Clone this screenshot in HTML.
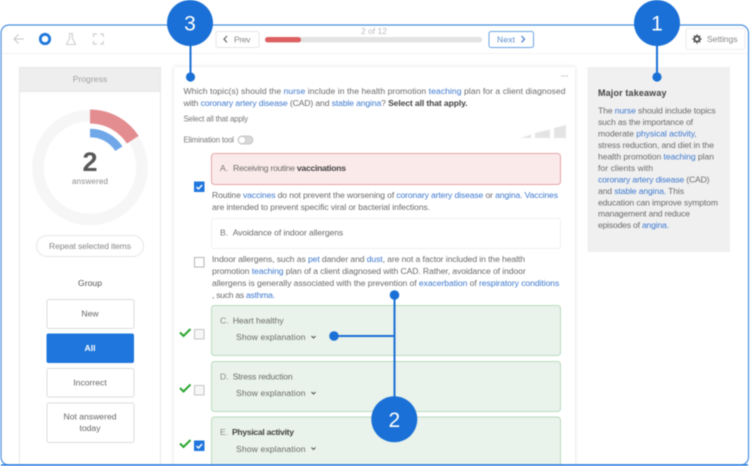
<!DOCTYPE html>
<html><head><meta charset="utf-8"><title>Question review</title>
<style>
html,body{margin:0;padding:0;width:750px;height:466px;overflow:hidden;background:#fff}
svg{display:block;filter:blur(.4px)}
text{font-family:"Liberation Sans",sans-serif;font-size:8.6px;fill:#6b6b6b}
.l{fill:#3d79cf}.b{font-weight:700;fill:#444}
.s{font-size:7.8px;fill:#777}
.c{text-anchor:middle}
.n{font-size:21px;fill:#fff;text-anchor:middle}
</style></head><body>
<svg width="750" height="466" viewBox="0 0 750 466" xmlns="http://www.w3.org/2000/svg">
<defs>
<clipPath id="f"><rect x="1" y="25" width="747.5" height="440" rx="8"/></clipPath>
<filter id="sh" x="-5%" y="-5%" width="110%" height="110%"><feDropShadow dx="0" dy="0" stdDeviation="2" flood-color="#000" flood-opacity=".13"/></filter>
</defs>
<rect width="750" height="466" fill="#fff"/>
<g clip-path="url(#f)">
<rect x="1" y="53" width="748" height="1" fill="#f3f3f3"/>
<!-- left panel -->
<rect x="19.5" y="67.5" width="141" height="410" fill="#fff" stroke="#e8e8e8"/>
<rect x="19.5" y="67.5" width="141" height="24" fill="#eeeeee" stroke="#e8e8e8"/>
<text x="90" y="82" class="c" style="fill:#a0a0a0">Progress</text>
<circle cx="90" cy="167.5" r="52" fill="none" stroke="#f6f6f6" stroke-width="11.5"/>
<path d="M90 116.5A51 51 0 0 1 132.8 139.7" fill="none" stroke="#e48d90" stroke-width="14"/>
<path d="M90 133A34.5 34.5 0 0 1 118.9 148.7" fill="none" stroke="#6fa7e9" stroke-width="8.5"/>
<text x="90" y="171" class="c" style="font-size:27px;font-weight:700;fill:#585858">2</text>
<text x="72" y="184" textLength="36" style="font-size:8px;fill:#8a8a8a">answered</text>
<rect x="36.5" y="235.5" width="107" height="21" rx="10.5" fill="#fff" stroke="#e6e6e6"/>
<text x="49" y="249" textLength="82" style="fill:#888">Repeat selected items</text>
<text x="78" y="286" textLength="24" style="fill:#555;font-size:8.6px">Group</text>
<rect x="47" y="299.5" width="87" height="29" rx="2" fill="#fff" stroke="#dcdcdc"/>
<text x="90" y="316.5" class="c" style="fill:#666">New</text>
<rect x="46.5" y="333.5" width="87.5" height="29.5" rx="2" fill="#1f76dc"/>
<text x="90" y="351" class="c" style="fill:#fff;font-weight:700">All</text>
<rect x="47" y="368.5" width="87" height="28.5" rx="2" fill="#fff" stroke="#dcdcdc"/>
<text x="90" y="385.5" class="c" style="fill:#666">Incorrect</text>
<rect x="47" y="403" width="87" height="39.5" rx="2" fill="#fff" stroke="#dcdcdc"/>
<text x="90" y="419.7" class="c" style="fill:#666">Not answered</text>
<text x="90" y="431" class="c" style="fill:#666">today</text>
<!-- main card -->
<rect x="174" y="67" width="401" height="420" fill="#fff" filter="url(#sh)"/>
<circle cx="562" cy="76" r=".7" fill="#bbb"/><circle cx="564.5" cy="76" r=".7" fill="#bbb"/><circle cx="567" cy="76" r=".7" fill="#bbb"/>
<text x="183.5" y="94" textLength="382">Which topic(s) should the <tspan class="l">nurse</tspan> include in the health promotion <tspan class="l">teaching</tspan> plan for a client diagnosed</text>
<text x="183.5" y="106" textLength="284">with <tspan class="l">coronary artery disease</tspan> (CAD) and <tspan class="l">stable angina</tspan>? <tspan class="b">Select all that apply.</tspan></text>
<text x="183.5" y="121.5" textLength="64.5" class="s">Select all that apply</text>
<text x="183.5" y="142.5" textLength="50.5" class="s">Elimination tool</text>
<rect x="238" y="136" width="15" height="8" rx="4" fill="#d8d8d8" stroke="#bdbdbd" stroke-width=".7"/>
<circle cx="242" cy="140" r="3.6" fill="#fff" stroke="#bdbdbd" stroke-width=".6"/>
<path d="M521 138L531 134.5V138ZM535 133L550 129.5V138H535ZM554 128L566 125V138H554Z" fill="#e4e4e4"/>
<!-- A -->
<rect x="211.5" y="153.5" width="349" height="31" rx="3" fill="#fbeaea" stroke="#e4a6a6"/>
<text x="220" y="171" style="fill:#777">A.</text>
<text x="233" y="171" textLength="113">Receiving routine <tspan class="b">vaccinations</tspan></text>
<rect x="194" y="181.5" width="10.5" height="10.5" fill="#1f76dc"/>
<path d="M196.5 187l2 2 3.6-4" fill="none" stroke="#fff" stroke-width="1.4"/>
<text x="212" y="198" textLength="346">Routine <tspan class="l">vaccines</tspan> do not prevent the worsening of <tspan class="l">coronary artery disease</tspan> or <tspan class="l">angina. Vaccines</tspan></text>
<text x="212" y="210" textLength="218">are intended to prevent specific viral or bacterial infections.</text>
<!-- B -->
<rect x="211.5" y="218.5" width="349" height="30" rx="2" fill="#fff" stroke="#f0f0f0"/>
<text x="220" y="235.5" style="fill:#777">B.</text>
<text x="232.7" y="235.5" textLength="110.5">Avoidance of indoor allergens</text>
<rect x="194.5" y="257.5" width="9.5" height="9.5" fill="#fff" stroke="#b5b5b5"/>
<text x="212" y="262" textLength="313">Indoor allergens, such as <tspan class="l">pet</tspan> dander and <tspan class="l">dust</tspan>, are not a factor included in the health</text>
<text x="212" y="274" textLength="313.7">promotion <tspan class="l">teaching</tspan> plan of a client diagnosed with CAD. Rather, avoidance of indoor</text>
<text x="212" y="286" textLength="347.3">allergens is generally associated with the prevention of <tspan class="l">exacerbation</tspan> of <tspan class="l">respiratory conditions</tspan></text>
<text x="212" y="298" textLength="63">, such as <tspan class="l">asthma.</tspan></text>
<!-- C -->
<rect x="211.5" y="305.5" width="349" height="50" rx="3" fill="#e9f2eb" stroke="#b9dcbc"/>
<text x="220" y="323.5" style="fill:#888">C.</text>
<text x="232.7" y="323.5" textLength="51">Heart healthy</text>
<text x="236" y="340" textLength="69.5">Show explanation</text>
<path d="M311.5 336l2 2 2-2" fill="none" stroke="#555" stroke-width="1.1"/>
<rect x="194.5" y="329.5" width="9.5" height="9.5" fill="#f7f7f7" stroke="#c4c4c4"/>
<path d="M180 332.5l3.5 3.5 7-7" fill="none" stroke="#2aa52f" stroke-width="2"/>
<!-- D -->
<rect x="211.5" y="361.5" width="349" height="50" rx="3" fill="#e9f2eb" stroke="#b9dcbc"/>
<text x="220" y="379.5" style="fill:#888">D.</text>
<text x="232.7" y="379.5" textLength="60">Stress reduction</text>
<text x="236" y="396" textLength="69.5">Show explanation</text>
<path d="M311.5 392l2 2 2-2" fill="none" stroke="#555" stroke-width="1.1"/>
<rect x="194.5" y="385.5" width="9.5" height="9.5" fill="#f7f7f7" stroke="#c4c4c4"/>
<path d="M180 388l3.5 3.5 7-7" fill="none" stroke="#2aa52f" stroke-width="2"/>
<!-- E -->
<rect x="211.5" y="417" width="349" height="70" rx="3" fill="#e9f2eb" stroke="#b9dcbc"/>
<text x="220" y="435" style="fill:#888">E.</text>
<text x="232" y="435" textLength="62" class="b">Physical activity</text>
<text x="236" y="452" textLength="69.5">Show explanation</text>
<path d="M311.5 447.5l2 2 2-2" fill="none" stroke="#555" stroke-width="1.1"/>
<rect x="194" y="440.5" width="10.5" height="10.5" fill="#1f76dc"/>
<path d="M196.5 446l2 2 3.6-4" fill="none" stroke="#fff" stroke-width="1.4"/>
<path d="M180 443.5l3.5 3.5 7-7" fill="none" stroke="#2aa52f" stroke-width="2"/>
<!-- right panel -->
<rect x="587.5" y="67" width="142.5" height="185" fill="#f0f0f0"/>
<text x="598" y="96" textLength="68.5" class="b" style="font-size:9px">Major takeaway</text>
<text x="598" y="113.5" textLength="117.7">The <tspan class="l">nurse</tspan> should include topics</text>
<text x="598" y="125" textLength="95">such as the importance of</text>
<text x="598" y="136.5" textLength="98.7">moderate <tspan class="l">physical activity,</tspan></text>
<text x="598" y="148" textLength="116">stress reduction, and diet in the</text>
<text x="598" y="159.5" textLength="116">health promotion <tspan class="l">teaching</tspan> plan</text>
<text x="598" y="171" textLength="55">for clients with</text>
<text x="598" y="182.3" textLength="111.5"><tspan class="l">coronary artery disease</tspan> (CAD)</text>
<text x="598" y="193.8" textLength="86">and <tspan class="l">stable angina.</tspan> This</text>
<text x="598" y="205.3" textLength="120">education can improve symptom</text>
<text x="598" y="216.6" textLength="92">management and reduce</text>
<text x="598" y="228.2" textLength="71">episodes of <tspan class="l">angina.</tspan></text>
<!-- header controls -->
<path d="M24 39H14.5M18.5 34.5L14 39l4.5 4.5" fill="none" stroke="#c9c9c9" stroke-width="1.1"/>
<circle cx="45" cy="39" r="4.7" fill="none" stroke="#1f76dc" stroke-width="2.8"/>
<path d="M69 33.5h4M69.7 33.5V38L66.5 44.5H75.5L72.3 38V33.5" fill="none" stroke="#cfcfcf" stroke-width="1.1"/>
<path d="M93.5 37V34H97M100 34h3.2v3M103.2 41v3H100M97 44H93.5v-3" fill="none" stroke="#cfcfcf" stroke-width="1.2"/>
<rect x="216" y="31.5" width="43" height="16" rx="2" fill="#fff" stroke="#e6e6e6"/>
<path d="M227 36l-3 3.2 3 3.2" fill="none" stroke="#666" stroke-width="1.2"/>
<text x="234" y="42.5" textLength="16.5" style="fill:#888">Prev</text>
<rect x="265" y="37" width="217" height="5.4" rx="2.7" fill="#e3e3e3"/>
<rect x="265" y="37" width="36" height="5.4" rx="2.7" fill="#dc5f62"/>
<text x="361" y="34" textLength="26" style="fill:#bdbdbd">2 of 12</text>
<rect x="489" y="31.5" width="44.5" height="16" rx="2" fill="#fff" stroke="#6aa4e4"/>
<text x="497" y="42.5" textLength="18" style="fill:#5b8fd0">Next</text>
<path d="M521.5 36l3 3.2-3 3.2" fill="none" stroke="#3d79cf" stroke-width="1.2"/>
<rect x="686" y="28.5" width="59" height="21" rx="2" fill="#fff" stroke="#ececec"/>
<circle cx="697" cy="39" r="2.6" fill="none" stroke="#555" stroke-width="2"/>
<path d="M697 34.3v1.5M697 42.2v1.5M692.3 39h1.5M700.2 39h1.5M693.7 35.7l1 1M699.3 41.3l1 1M693.7 42.3l1-1M699.3 36.7l1-1" stroke="#555" stroke-width="1.2"/>
<text x="707" y="42" textLength="30.5" style="fill:#888">Settings</text>
</g>
<rect x="1" y="25" width="747.5" height="440" rx="8" fill="none" stroke="#4a8fdf" stroke-width="1.2"/>
<path d="M1 465H748" stroke="#1f76dc" stroke-width="1.6"/>
<!-- callouts -->
<g fill="#1a70d6">
<rect x="189.5" y="23" width="2" height="54"/><circle cx="190.5" cy="77" r="4.6"/><circle cx="190" cy="23" r="23"/>
<rect x="656" y="23" width="2" height="54"/><circle cx="657" cy="77" r="4.6"/><circle cx="657" cy="23" r="23"/>
<rect x="393.5" y="295" width="2" height="110"/><rect x="334" y="335" width="60" height="2"/>
<circle cx="394.5" cy="295" r="4.8"/><circle cx="334" cy="336" r="4.8"/><circle cx="394.3" cy="419.3" r="23"/>
</g>
<text x="190" y="30.5" class="n">3</text>
<text x="657" y="30.5" class="n">1</text>
<text x="394.3" y="427" class="n">2</text>
</svg>
</body></html>
